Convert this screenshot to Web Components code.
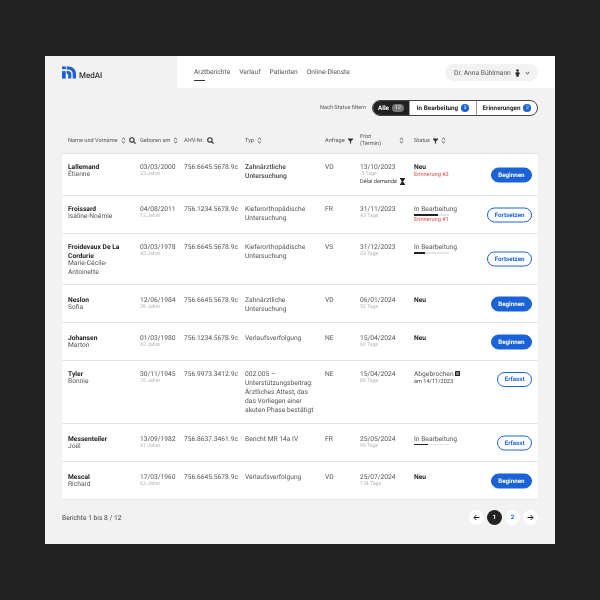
<!DOCTYPE html>
<html lang="de">
<head>
<meta charset="utf-8">
<title>MedAI</title>
<style>
  html, body { margin:0; height:100%; background:#222; }
  body { font-family:Roboto, "Noto Sans", sans-serif; color:#2b2b2b; text-rendering:geometricPrecision; }
  med-app { will-change:transform; }
</style>
</head>
<body>
<med-app>
  <med-header slot="header" user="Dr. Anna Bühlmann"></med-header>
  <med-filter slot="filter"></med-filter>
  <med-table slot="table">
    <med-row last="Lallemand" first="Étienne" dob="03/03/2000" age="23 Jahre" ahv="756.6645.5678.9c" typ="Zahnärztliche Untersuchung" typ-bold lang="VD" due="13/10/2023" days="-5 Tage" delay status="Neu" reminder="Erinnerung #2" class="tall">
      <med-button kind="solid">Beginnen</med-button>
    </med-row>
    <med-row last="Froissard" first="Isaline-Noémie" dob="04/08/2011" age="12 Jahre" ahv="756.1234.5678.9c" typ="Kieferorthopädische Untersuchung" lang="FR" due="31/11/2023" days="43 Tage" status="In Bearbeitung" progress="69" reminder="Erinnerung #1">
      <med-button>Fortsetzen</med-button>
    </med-row>
    <med-row last="Froidevaux De La Cordurie" first="Marie-Cécile-Antoinette" dob="03/03/1978" age="45 Jahre" ahv="756.6645.5678.9c" typ="Kieferorthopädische Untersuchung" lang="VS" due="31/12/2023" days="43 Tage" status="In Bearbeitung" progress="30">
      <med-button>Fortsetzen</med-button>
    </med-row>
    <med-row class="short" last="Neslon" first="Sofia" dob="12/06/1984" age="39 Jahre" ahv="756.6645.5678.9c" typ="Zahnärztliche Untersuchung" lang="VD" due="06/01/2024" days="52 Tage" status="Neu">
      <med-button kind="solid">Beginnen</med-button>
    </med-row>
    <med-row class="short" last="Johansen" first="Marton" dob="01/03/1980" age="43 Jahre" ahv="756.1234.5678.9c" typ="Verlaufsverfolgung" lang="NE" due="15/04/2024" days="60 Tage" status="Neu">
      <med-button kind="solid">Beginnen</med-button>
    </med-row>
    <med-row last="Tyler" first="Bonnie" dob="30/11/1945" age="78 Jahre" ahv="756.9973.3412.9c" typ="002.005 – Unterstützungsbeitrag: Ärztliches Attest, das das Vorliegen einer akuten Phase bestätigt" lang="NE" due="15/04/2024" days="88 Tage" status="Abgebrochen" stopped="am 14/11/2023" action-top>
      <med-button>Erfasst</med-button>
    </med-row>
    <med-row class="short" last="Messenteiler" first="Joël" dob="13/09/1982" age="41 Jahre" ahv="756.8637.3461.9c" typ="Bericht MR 14a IV" lang="FR" due="25/05/2024" days="98 Tage" status="In Bearbeitung" progress="40">
      <med-button>Erfasst</med-button>
    </med-row>
    <med-row class="short" last="Mescal" first="Richard" dob="17/03/1960" age="63 Jahre" ahv="756.6645.5678.9c" typ="Verlaufsverfolgung" lang="VD" due="25/07/2024" days="134 Tage" status="Neu">
      <med-button kind="solid">Beginnen</med-button>
    </med-row>
  </med-table>
  <med-pager slot="pager" summary="Berichte 1 bis 8 / 12"></med-pager>
</med-app>

<script>
const ICONS = {
  sort: `<svg width="5" height="7" viewBox="0 0 5 7" fill="none" stroke="#444" stroke-width=".9"><path d="M.9 2.6 2.5 1.1l1.6 1.5M.9 4.4 2.5 5.9l1.6-1.5"/></svg>`,
  search: `<svg width="7" height="7" viewBox="0 0 7 7" fill="none" stroke="#333" stroke-width="1.1"><circle cx="2.9" cy="2.9" r="2.2"/><path d="M4.6 4.6 6.6 6.6"/></svg>`,
  funnel: `<svg width="5" height="6" viewBox="0 0 5 6" fill="#333"><path d="M0 .5h5v1L3.1 3.2V5.6H1.9V3.2L0 1.5z"/></svg>`,
  person: `<svg width="5" height="8" viewBox="0 0 6 9" fill="#222"><circle cx="3" cy="1.6" r="1.5"/><path d="M.6 3.6h4.8v2.8H4.4V9H1.6V6.4H.6z"/></svg>`,
  chevron: `<svg width="5" height="4" viewBox="0 0 5 4" fill="none" stroke="#333" stroke-width="1"><path d="M.8 1.2 2.5 2.8 4.2 1.2"/></svg>`,
  hourglass: `<svg width="5" height="7" viewBox="0 0 5 7" fill="#222"><path d="M0 0h5v1H4.4v.7L3 3.5 4.4 5.3V6H5v1H0V6H.6v-.7L2 3.5.6 1.7V1H0z"/></svg>`,
  note: `<svg width="5" height="5" viewBox="0 0 5 5"><rect width="5" height="5" rx=".6" fill="#222"/><path d="M1.2 1.5h2.6M1.2 2.5h2.6M1.2 3.5h2.6" stroke="#fff" stroke-width=".5"/></svg>`,
  left: `<svg width="7" height="7" viewBox="0 0 7 7" fill="none" stroke="#222" stroke-width="1"><path d="M6.5 3.5H1M3.4 1 1 3.5 3.4 6"/></svg>`,
  right: `<svg width="7" height="7" viewBox="0 0 7 7" fill="none" stroke="#222" stroke-width="1"><path d="M.5 3.5H6M3.6 1 6 3.5 3.6 6"/></svg>`,
};

const COLS = "72px 44px 61px 80px 35px 54px 1fr";

class MedApp extends HTMLElement {
  constructor() {
    super();
    this.attachShadow({ mode: "open" });
    this.shadowRoot.innerHTML = `
      <style>
        :host { display:flex; justify-content:center; padding-top:56px; }
        .card { width:510px; height:488px; background:#f2f2f2; display:flex; flex-direction:column; }
        .body { padding:0 17px; display:flex; flex-direction:column; }
      </style>
      <div class="card">
        <slot name="header"></slot>
        <div class="body">
          <slot name="filter"></slot>
          <slot name="table"></slot>
          <slot name="pager"></slot>
        </div>
      </div>`;
  }
}

class MedHeader extends HTMLElement {
  constructor() {
    super();
    this.attachShadow({ mode: "open" });
  }
  connectedCallback() {
    this.shadowRoot.innerHTML = `
      <style>
        :host { display:flex; height:32px; font-size:6.7px; color:#555; }
        .brand { width:132px; display:flex; align-items:flex-start; padding:10px 0 0 17px; box-sizing:border-box; gap:2px; }
        .brand span { font-size:8px; font-weight:500; color:#333; margin-top:5px; line-height:9px; }
        nav { flex:1; background:#fff; display:flex; align-items:center; padding:0 17px; }
        a { margin-right:9px; position:relative; line-height:32px; }
        a.on::after { content:""; position:absolute; left:0; width:11px; bottom:7px; height:1.2px; background:#333; }
        .user { margin-left:auto; height:17px; width:93px; box-sizing:border-box; margin-top:1px; border-radius:9px; background:#f2f2f2; display:flex; align-items:center; gap:4px; padding-left:9px; }
        .user svg:last-child { margin-left:1px; }
      </style>
      <div class="brand">
        <svg width="15" height="13" viewBox="0 0 16 13" fill="#1a62d8">
          <rect x="0" y="0" width="4" height="3"/>
          <rect x="0" y="5" width="4" height="8"/>
          <path d="M5 0h2c4.6 0 8 3.4 8 8v5h-3.6V8c0-2.6-1.9-4.6-4.4-4.6H5z"/>
          <path d="M5 5h1.6c1.9 0 3.3 1.4 3.3 3.3V13H6.6V8.6c0-.3-.2-.5-.5-.5H5z"/>
        </svg>
        <span>MedAI</span>
      </div>
      <nav>
        <a class="on">Arztberichte</a><a>Verlauf</a><a>Patienten</a><a>Online-Dienste</a>
        <div class="user">${this.getAttribute("user")} ${ICONS.person}${ICONS.chevron}</div>
      </nav>`;
  }
}

class MedFilter extends HTMLElement {
  constructor() {
    super();
    this.attachShadow({ mode: "open" });
    const item = (label, count, cls) => `<div class="seg ${cls}"><b>${label}</b><i>${count}</i></div>`;
    this.shadowRoot.innerHTML = `
      <style>
        :host { display:flex; justify-content:flex-end; align-items:center; gap:6px; height:16px; margin-top:12px; font-size:5.6px; color:#555; }
        .pill { display:flex; height:16px; box-sizing:border-box; width:166px; border:1px solid #444; border-radius:8px; background:#fff; overflow:hidden; }
        .seg { display:flex; align-items:center; justify-content:center; gap:3px; color:#222; font-size:6.3px; border-left:1px solid #999; }
        .seg b { font-weight:700; }
        .seg i { font-style:normal; font-size:5px; width:8px; height:8px; border-radius:50%; background:#1a62d8; color:#fff; display:grid; place-items:center; }
        .all { width:36px; background:#222; color:#fff; border-left:0; }
        .all i { width:12px; border-radius:4px; background:#777; }
        .edit { width:66px; }
        .rem { flex:1; }
      </style>
      <span>Nach Status filtern</span>
      <div class="pill">
        ${item("Alle", 12, "all")}${item("In Bearbeitung", 3, "edit")}${item("Erinnerungen", 2, "rem")}
      </div>`;
  }
}

class MedTable extends HTMLElement {
  constructor() {
    super();
    this.attachShadow({ mode: "open" });
    this.shadowRoot.innerHTML = `
      <style>
        :host { display:block; margin-top:12px; }
        .head { display:grid; grid-template-columns:${COLS}; align-items:center; height:25px; padding-left:6px; font-size:5.6px; color:#555; }
        .head > div { display:flex; align-items:center; gap:3px; }
        .head svg { flex:none; }
        .frist { line-height:7px; gap:18px !important; }
        .rows { display:flex; flex-direction:column; gap:1px; background:#e2e2e2; border-top:1px solid #e2e2e2; border-bottom:1px solid #e2e2e2; }
      </style>
      <div class="head">
        <div>Name und Vorname ${ICONS.sort} ${ICONS.search}</div>
        <div>Geboren am ${ICONS.sort}</div>
        <div>AHV-Nr. ${ICONS.search}</div>
        <div>Typ ${ICONS.sort}</div>
        <div>Anfrage ${ICONS.funnel}</div>
        <div class="frist"><span>Frist<br>(Termin)</span>${ICONS.sort}</div>
        <div>Status ${ICONS.funnel} ${ICONS.sort}</div>
      </div>
      <div class="rows"><slot></slot></div>`;
  }
}

class MedRow extends HTMLElement {
  constructor() {
    super();
    this.attachShadow({ mode: "open" });
  }
  connectedCallback() {
    const a = (n) => this.getAttribute(n);
    let status = `<div class="${a("status") === "Neu" ? "strong" : ""}">${a("status")}${a("stopped") ? " " + ICONS.note : ""}</div>`;
    if (a("progress")) status += `<div class="bar"><span style="width:${a("progress")}%"></span></div>`;
    if (a("stopped")) status += `<div class="stopped">${a("stopped")}</div>`;
    if (a("reminder")) status += `<div class="reminder">${a("reminder")}</div>`;
    this.shadowRoot.innerHTML = `
      <style>
        :host { display:block; background:#fff; }
        .row { position:relative; display:grid; grid-template-columns:${COLS}; min-height:37px; box-sizing:border-box; padding:9px 6px 7px 6px; font-size:6.7px; line-height:9px; color:#555; }
        :host(.tall) .row { min-height:41px; }
        :host(.short) .row { padding-top:10.5px; padding-bottom:5.5px; }
        :host([action-top]) .row { min-height:62px; }
        .name { padding-right:6px; }
        .strong, .last { font-weight:700; color:#222; }
        .first { margin-top:-2px; }
        .age { font-size:5.2px; line-height:6px; color:#b5b5b5; margin-top:-1px; }
        .typ { padding-right:5px; }
        :host([typ-bold]) .typ { font-weight:500; color:#444; }
        .delay { display:flex; align-items:center; gap:3px; font-size:5.6px; line-height:8px; color:#444; margin-top:.5px; }
        .bar { width:35px; height:1.5px; background:#e4e4e4; margin:0 0 1px; }
        .bar span { display:block; height:100%; background:#222; }
        .reminder { font-size:5.6px; line-height:7px; color:#e5484d; }
        .stopped { font-size:5.6px; line-height:7px; color:#444; }
        .action { position:absolute; right:6px; top:50%; transform:translateY(-50%); line-height:0; }
        :host([action-top]) .action { top:11px; transform:none; }
      </style>
      <div class="row">
        <div class="name"><div class="last">${a("last")}</div><div class="first">${a("first")}</div></div>
        <div><div>${a("dob")}</div><div class="age">${a("age")}</div></div>
        <div>${a("ahv")}</div>
        <div class="typ">${a("typ")}</div>
        <div>${a("lang")}</div>
        <div><div>${a("due")}</div><div class="age">${a("days")}</div>${this.hasAttribute("delay") ? `<div class="delay">Délai demandé ${ICONS.hourglass}</div>` : ""}</div>
        <div class="status">${status}</div>
        <div class="action"><slot></slot></div>
      </div>`;
  }
}

class MedButton extends HTMLElement {
  constructor() {
    super();
    this.attachShadow({ mode: "open" });
    this.shadowRoot.innerHTML = `
      <style>
        :host { display:inline-flex; align-items:center; justify-content:center; height:15px; box-sizing:border-box; padding:0 6.5px; border:1px solid #1a62d8; border-radius:8px; color:#1a62d8; background:#fff; font-size:6.2px; font-weight:700; line-height:9px; }
        :host([kind="solid"]) { background:#1a62d8; color:#fff; }
      </style><slot></slot>`;
  }
}

class MedPager extends HTMLElement {
  constructor() {
    super();
    this.attachShadow({ mode: "open" });
  }
  connectedCallback() {
    this.shadowRoot.innerHTML = `
      <style>
        :host { display:flex; align-items:center; justify-content:space-between; margin-top:10px; font-size:6.7px; color:#444; }
        .pages { display:flex; gap:3px; }
        .pages div { width:15px; height:15px; border-radius:50%; background:#fff; display:grid; place-items:center; font-size:6px; font-weight:700; color:#1a62d8; }
        .pages .on { background:#222; color:#fff; }
      </style>
      <span>${this.getAttribute("summary")}</span>
      <div class="pages">
        <div>${ICONS.left}</div><div class="on">1</div><div>2</div><div>${ICONS.right}</div>
      </div>`;
  }
}

customElements.define("med-app", MedApp);
customElements.define("med-header", MedHeader);
customElements.define("med-filter", MedFilter);
customElements.define("med-table", MedTable);
customElements.define("med-row", MedRow);
customElements.define("med-button", MedButton);
customElements.define("med-pager", MedPager);
</script>
</body>
</html>
